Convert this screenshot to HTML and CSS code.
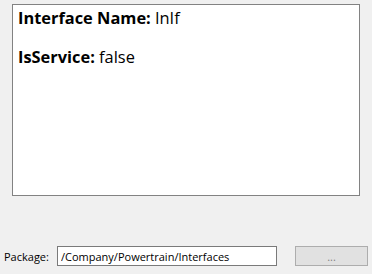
FILE: index.html
```
<!DOCTYPE html>
<html lang="en">
<head>
    <meta charset="UTF-8">
    <title>Interface Properties</title>
    <link rel="stylesheet" href="styles.css">
</head>
<body>
    <div class="panel">
        <div class="info">
            <p><b>Interface Name:</b> InIf</p>
            <p><b>IsService:</b> false</p>
        </div>
        <div class="package-row">
            <label for="pkg">Package:</label>
            <input type="text" id="pkg" value="/Company/Powertrain/Interfaces">
            <button type="button" disabled>...</button>
        </div>
    </div>
</body>
</html>
```
FILE: styles.css
```
html, body { margin: 0; padding: 0; background: #f0f0f0; }
body { font-family: "Open Sans", "Noto Sans", sans-serif; font-size: 11px; color: #000; }
.panel { width: 372px; height: 274px; display: flex; flex-direction: column; }
.info { margin: 4px 0 0 12px; width: 348px; height: 192px; background: #fff; border: 1px solid #828282; padding: 0 0 0 5px; box-sizing: border-box; }
.info p { margin: 0 0 13px 0; font-size: 16.4px; line-height: 26px; }
.package-row { display: flex; align-items: center; margin-top: 50px; padding-left: 4px; }
.package-row label { width: 53px; }
.package-row input { width: 220px; height: 20px; box-sizing: border-box; border: 1px solid #7a7a7a; padding: 0 3px; font: inherit; background: #fff; margin: 0; }
.package-row button { margin-left: 18px; width: 73px; height: 20px; box-sizing: border-box; border: 1px solid #adadad; background: #e1e1e1; color: #838383; font: inherit; padding: 0; }
```
